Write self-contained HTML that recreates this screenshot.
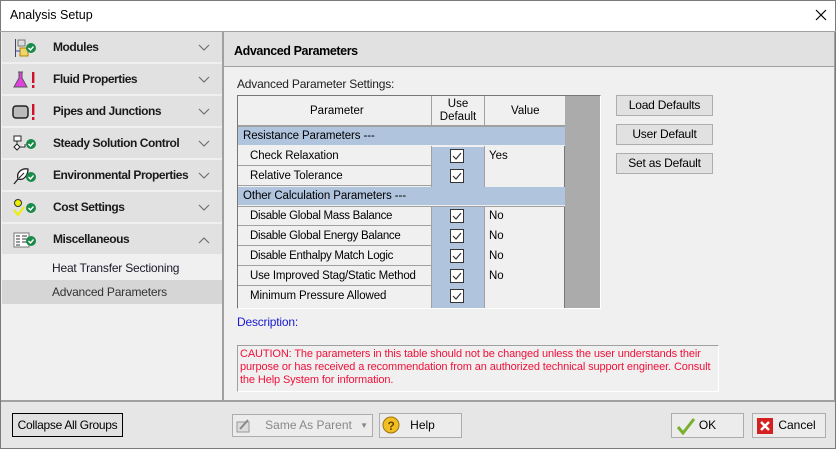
<!DOCTYPE html>
<html><head><style>
*{margin:0;padding:0;box-sizing:border-box}
body{width:836px;height:449px;overflow:hidden;background:#f0f0f0;font-family:"Liberation Sans",sans-serif;font-size:12px;color:#000;position:relative}
.a{position:absolute}
.win{left:0;top:0;width:836px;height:449px;border:1px solid #7a7a7a}
.title{left:1px;top:1px;width:834px;height:30px;background:#fff}
.hdr{left:2px;width:220px;height:30px;background:#e1e1e1}
.hdr b{position:absolute;left:51px;top:8px;font-size:12px;color:#1a1a1a;letter-spacing:-0.45px}
.chev{position:absolute;left:196px;top:12px;width:12px;height:8px}
.ic{position:absolute;left:10px;top:6px}
.cell{position:absolute;height:20px;line-height:21px;font-size:11.5px;border-bottom:1px solid #a0a0a0;white-space:nowrap;letter-spacing:-0.1px}
.btn{position:absolute;background:#e1e1e1;border:1px solid #adadad;text-align:center;font-size:12px}
.btn span{display:block}
</style></head><body>
<div class="a win"></div>
<div class="a title"></div>
<div class="a" style="left:10px;top:8px;font-size:12.5px">Analysis Setup</div>
<svg class="a" style="left:815px;top:9px" width="12" height="12"><path d="M1 1L11 11M11 1L1 11" stroke="#000" stroke-width="1.2"/></svg>
<div class="a" style="left:0;top:31px;width:836px;height:1px;background:#a0a0a0"></div>

<div class="a" style="left:1px;top:32px;width:222px;height:368px;background:#f0f0f0"></div>
<div class="a hdr" style="top:32px"><svg class="ic" width="24" height="20"><rect x="3" y="1" width="1" height="18" fill="#446"/><rect x="6" y="2" width="7" height="6" fill="#ddd" stroke="#777"/><rect x="8" y="10" width="8" height="8" fill="#f2d26a" stroke="#a80"/><path d="M4 13h4" stroke="#24c"/><circle cx="19" cy="10" r="5" fill="#1a8a4a"/><path d="M16.5 10l2 2 3-3.5" stroke="#fff" stroke-width="1.4" fill="none"/></svg><b>Modules</b><svg class="chev" viewBox="0 0 12 8"><path d="M1 1l5 5 5-5" stroke="#666" fill="none"/></svg></div>
<div class="a hdr" style="top:64px"><svg class="ic" width="24" height="20"><path d="M6 2h5M7 2v6L2 17h13L10 8V2" fill="#e040e0" stroke="#555"/><rect x="20" y="2" width="2.4" height="11" fill="#d0102a"/><rect x="20" y="15" width="2.4" height="3" fill="#d0102a"/></svg><b>Fluid Properties</b><svg class="chev" viewBox="0 0 12 8"><path d="M1 1l5 5 5-5" stroke="#666" fill="none"/></svg></div>
<div class="a hdr" style="top:96px"><svg class="ic" width="24" height="20"><rect x="1" y="4" width="15" height="12" rx="3" fill="#bbb" stroke="#222" stroke-width="1.5"/><rect x="20" y="2" width="2.4" height="11" fill="#d0102a"/><rect x="20" y="15" width="2.4" height="3" fill="#d0102a"/></svg><b>Pipes and Junctions</b><svg class="chev" viewBox="0 0 12 8"><path d="M1 1l5 5 5-5" stroke="#666" fill="none"/></svg></div>
<div class="a hdr" style="top:128px"><svg class="ic" width="24" height="20"><rect x="2" y="2" width="7" height="5" fill="#fff" stroke="#222"/><path d="M5 7v3M5 10l3 3-3 3-3-3z M8 13h5v-3" stroke="#222" fill="#fff"/><circle cx="19" cy="10" r="5" fill="#1a8a4a"/><path d="M16.5 10l2 2 3-3.5" stroke="#fff" stroke-width="1.4" fill="none"/></svg><b>Steady Solution Control</b><svg class="chev" viewBox="0 0 12 8"><path d="M1 1l5 5 5-5" stroke="#666" fill="none"/></svg></div>
<div class="a hdr" style="top:160px"><svg class="ic" width="24" height="20"><path d="M2 18L6 13C4 6 10 2 16 3C16 9 12 15 6 13" stroke="#222" fill="#fff" stroke-width="1.3"/><path d="M7 12l5-5" stroke="#222"/><circle cx="19" cy="11" r="5" fill="#1a8a4a"/><path d="M16.5 11l2 2 3-3.5" stroke="#fff" stroke-width="1.4" fill="none"/></svg><b>Environmental Properties</b><svg class="chev" viewBox="0 0 12 8"><path d="M1 1l5 5 5-5" stroke="#666" fill="none"/></svg></div>
<div class="a hdr" style="top:192px"><svg class="ic" width="24" height="20"><circle cx="6" cy="5" r="3.5" fill="#ee0" stroke="#333"/><path d="M2 12l4 5 6-8" stroke="#ee0" stroke-width="2" fill="none"/><circle cx="19" cy="10" r="5" fill="#1a8a4a"/><path d="M16.5 10l2 2 3-3.5" stroke="#fff" stroke-width="1.4" fill="none"/></svg><b>Cost Settings</b><svg class="chev" viewBox="0 0 12 8"><path d="M1 1l5 5 5-5" stroke="#666" fill="none"/></svg></div>
<div class="a hdr" style="top:224px"><svg class="ic" width="24" height="20"><rect x="2" y="3" width="15" height="14" fill="#fff" stroke="#777"/><path d="M4 6h4M4 9h4M4 12h4M4 15h4M10 6h5M10 9h5M10 12h5" stroke="#333"/><circle cx="19" cy="11" r="5" fill="#1a8a4a"/><path d="M16.5 11l2 2 3-3.5" stroke="#fff" stroke-width="1.4" fill="none"/></svg><b>Miscellaneous</b><svg class="chev" viewBox="0 0 12 8"><path d="M1 7l5-5 5 5" stroke="#666" fill="none"/></svg></div>
<div class="a" style="left:52px;top:261px;color:#1a1a2a;letter-spacing:-0.2px">Heat Transfer Sectioning</div>
<div class="a" style="left:2px;top:280px;width:220px;height:24px;background:#d6d6d6"></div>
<div class="a" style="left:52px;top:285px;color:#333;letter-spacing:-0.2px">Advanced Parameters</div>
<div class="a" style="left:222px;top:32px;width:2px;height:369px;background:#a0a0a0"></div>

<div class="a" style="left:224px;top:32px;width:610px;height:35px;background:#e1e1e1;border-bottom:1px solid #a0a0a0"></div>
<div class="a" style="left:834px;top:32px;width:1px;height:369px;background:#a0a0a0"></div>
<div class="a" style="left:234px;top:44px;font-weight:bold;font-size:12.5px;letter-spacing:-0.4px">Advanced Parameters</div>
<div class="a" style="left:237px;top:77px;color:#222;letter-spacing:-0.2px">Advanced Parameter Settings:</div>

<div class="a" style="left:237px;top:95px;width:364px;height:214px;background:#ababab;border:1px solid #777;border-right-color:#fff;border-bottom-color:#fff"></div>
<div class="a" style="left:238px;top:96px;width:327px;height:212px;background:#f0f0f0;border-right:1px solid #777"></div>
<div class="a" style="left:238px;top:96px;width:327px;height:30px;background:#f0f0f0;border-bottom:1px solid #a0a0a0"></div>
<div class="a" style="left:310px;top:105px;font-size:11.5px">Parameter</div>
<div class="a" style="left:431px;top:96px;width:54px;height:212px;border-left:1px solid #a0a0a0;border-right:1px solid #a0a0a0"></div>
<div class="a" style="left:432px;top:98px;width:52px;text-align:center;line-height:13px;font-size:11.5px">Use<br>Default</div>
<div class="a" style="left:511px;top:105px;font-size:11.5px">Value</div>
<div class="a" style="left:238px;top:127px;width:327px;height:19px;background:#b0c4de"></div>
<div class="a" style="left:238px;top:187px;width:327px;height:19px;background:#b0c4de"></div>
<div class="a" style="left:432px;top:127px;width:52px;height:181px;background:#b0c4de"></div>
<div class="cell" style="left:238px;top:126px;width:327px;padding-left:5px;border-color:#f0f0f0">Resistance Parameters ---</div>
<div class="cell" style="left:238px;top:146px;width:194px;padding-left:12px">Check Relaxation</div>
<div class="cell" style="left:238px;top:166px;width:194px;padding-left:12px">Relative Tolerance</div>
<div class="cell" style="left:238px;top:186px;width:327px;padding-left:5px;border-color:#f0f0f0">Other Calculation Parameters ---</div>
<div class="cell" style="left:238px;top:206px;width:194px;padding-left:12px;letter-spacing:-0.3px">Disable Global Mass Balance</div>
<div class="cell" style="left:238px;top:226px;width:194px;padding-left:12px;letter-spacing:-0.3px">Disable Global Energy Balance</div>
<div class="cell" style="left:238px;top:246px;width:194px;padding-left:12px;letter-spacing:-0.3px">Disable Enthalpy Match Logic</div>
<div class="cell" style="left:238px;top:266px;width:194px;padding-left:12px;letter-spacing:-0.2px">Use Improved Stag/Static Method</div>
<div class="cell" style="left:238px;top:286px;width:194px;padding-left:12px;border:none">Minimum Pressure Allowed</div>
<div class="a" style="left:238px;top:126px;width:327px;height:1px;background:#a0a0a0"></div>
<div class="a" style="left:238px;top:206px;width:327px;height:1px;background:#a0a0a0"></div>
<div class="a" style="left:432px;top:146px;width:52px;height:1px;background:#f0f0f0"></div>
<svg class="a" style="left:450px;top:149px" width="14" height="160">
<g fill="#fff" stroke="#333"><rect x=".5" y=".5" width="13" height="13"/><rect x=".5" y="20.5" width="13" height="13"/><rect x=".5" y="60.5" width="13" height="13"/><rect x=".5" y="80.5" width="13" height="13"/><rect x=".5" y="100.5" width="13" height="13"/><rect x=".5" y="120.5" width="13" height="13"/><rect x=".5" y="140.5" width="13" height="13"/></g>
<g fill="none" stroke="#333" stroke-width="1.2"><path d="M3 7l3 3 5-6"/><path d="M3 27l3 3 5-6"/><path d="M3 67l3 3 5-6"/><path d="M3 87l3 3 5-6"/><path d="M3 107l3 3 5-6"/><path d="M3 127l3 3 5-6"/><path d="M3 147l3 3 5-6"/></g></svg>
<div class="a" style="left:489px;top:150px;font-size:11.5px">Yes</div>
<div class="a" style="left:489px;top:210px;font-size:11.5px">No</div>
<div class="a" style="left:489px;top:230px;font-size:11.5px">No</div>
<div class="a" style="left:489px;top:250px;font-size:11.5px">No</div>
<div class="a" style="left:489px;top:270px;font-size:11.5px">No</div>

<div class="btn" style="left:616px;top:95px;width:97px;height:21px;line-height:19px;letter-spacing:-0.2px">Load Defaults</div>
<div class="btn" style="left:616px;top:124px;width:97px;height:21px;line-height:19px;letter-spacing:-0.2px">User Default</div>
<div class="btn" style="left:616px;top:153px;width:97px;height:21px;line-height:19px;letter-spacing:-0.2px">Set as Default</div>

<div class="a" style="left:237px;top:315px;color:#1a1ad0;letter-spacing:-0.2px">Description:</div>
<div class="a" style="left:237px;top:345px;width:482px;height:47px;border:1px solid #a0a0a0;border-right-color:#fff;border-bottom-color:#fff;color:#f0103a;padding:2px 2px;line-height:13px;font-size:11px;letter-spacing:-0.12px;white-space:nowrap;overflow:hidden">CAUTION: The parameters in this table should not be changed unless the user understands their<br>purpose or has received a recommendation from an authorized technical support engineer. Consult<br>the Help System for information.</div>

<div class="a" style="left:1px;top:400px;width:834px;height:2px;background:#a0a0a0"></div>
<div class="a" style="left:1px;top:402px;width:834px;height:46px;background:#e6e6e6"></div>
<div class="btn" style="left:12px;top:413px;width:111px;height:24px;line-height:22px;border-color:#000;background:#e1e1e1;letter-spacing:-0.3px">Collapse All Groups</div>
<div class="btn" style="left:232px;top:414px;width:141px;height:23px;line-height:21px;background:#ececec;color:#888"><svg style="position:absolute;left:3px;top:3px" width="16" height="16"><rect x="1" y="4" width="12" height="10" fill="#ddd" stroke="#999"/><path d="M4 11l8-9" stroke="#888" stroke-width="2"/></svg><span style="padding-left:12px">Same As Parent</span><span style="position:absolute;right:4px;top:0;font-size:8px">▼</span></div>
<div class="btn" style="left:379px;top:413px;width:83px;height:25px;line-height:23px;background:#ececec"><svg style="position:absolute;left:2px;top:2px" width="20" height="20"><circle cx="9" cy="9" r="8" fill="#f0c020" stroke="#a07010"/><text x="5.5" y="14" font-size="12" font-weight="bold" fill="#704000" font-family="Liberation Sans">?</text></svg><span style="padding-left:4px">Help</span></div>
<div class="btn" style="left:671px;top:413px;width:73px;height:25px;line-height:23px;background:#ececec"><svg style="position:absolute;left:4px;top:3px" width="20" height="18"><path d="M2 10l5 6L18 2" stroke="#7ab030" stroke-width="3" fill="none"/></svg><span>OK</span></div>
<div class="btn" style="left:752px;top:413px;width:74px;height:25px;line-height:23px;background:#ececec"><svg style="position:absolute;left:4px;top:4px" width="16" height="16"><rect width="16" height="16" fill="#d42020"/><path d="M4 4l8 8M12 4l-8 8" stroke="#fff" stroke-width="2.4"/></svg><span style="padding-left:16px">Cancel</span></div>
</body></html>
